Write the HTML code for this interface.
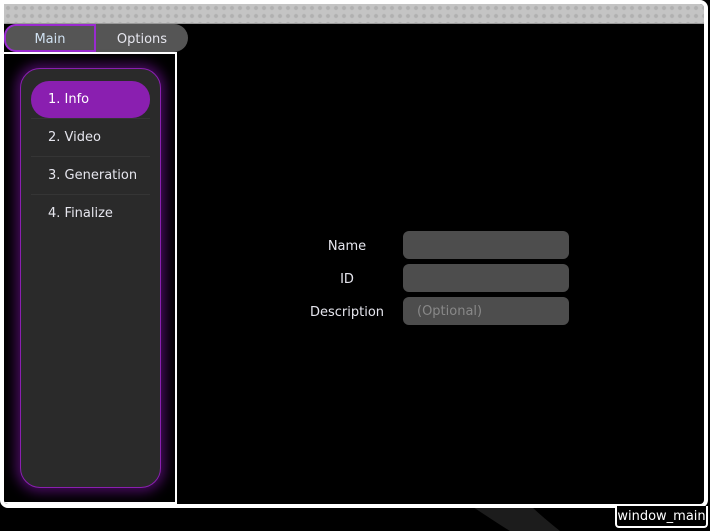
<!DOCTYPE html>
<html><head><style>
body{margin:0;width:710px;height:531px;background:#000;position:relative;overflow:hidden;font-family:"DejaVu Sans","Liberation Sans",sans-serif;font-size:13px;color:#e6e6ee}
.frame{position:absolute;left:0;top:0;width:700px;height:500px;border:4px solid #fff;border-radius:0 8px 8px 8px;background:#000;overflow:hidden}
.check{position:absolute;left:0;top:0;width:700px;height:19px;background-color:#c4c4c4;background-image:radial-gradient(circle,#b0b0b0 1.5px,transparent 2.5px);background-size:8px 8px;border-bottom:1px solid #999}
.tabs{position:absolute;left:0;top:20px;width:184px;height:28px;background:#555;border-radius:14px}
.tab{position:absolute;top:0;height:28px;line-height:32px;text-align:center;font-size:13px}
.side{position:absolute;left:0;top:48px;width:171px;height:448px;border:2px solid #fff;border-left:none;background:#000}
.panel{position:absolute;left:16px;top:14px;width:139px;height:418px;background:#2a2a2a;border:1px solid #8a1fb0;border-radius:20px;box-shadow:0 0 12px 4px rgba(120,20,160,.6)}
.item{position:absolute;left:10px;width:119px;height:37px;line-height:37px;padding-left:17px;box-sizing:border-box;font-size:13px}
.sep{position:absolute;left:10px;width:119px;height:1px;background:#353535}
.lbl{position:absolute;width:100px;text-align:center;left:297px}
.inp{position:absolute;left:403px;width:166px;height:28px;background:#4d4d4d;border-radius:6px}
</style></head><body>
<svg style="position:absolute;left:0;top:505px" width="710" height="26"><path d="M470 0 Q500 20 510 26 L560 26 Q540 10 530 0Z" fill="#1c1c1c"/></svg>
<div class="frame">
<div class="check"></div>
<div class="tabs">
<div class="tab" style="left:0;width:92px;border:2px solid #9a2ad0;box-sizing:border-box;border-radius:12px 0 0 12px;line-height:28px;color:#cfe0f0">Main</div>
<div class="tab" style="left:92px;width:92px">Options</div>
</div>
<div class="side"><div class="panel">
<div class="item" style="top:12px;background:#8a1fb0;border-radius:18px;color:#fff">1. Info</div>
<div class="sep" style="top:49px"></div>
<div class="item" style="top:50px">2. Video</div>
<div class="sep" style="top:87px"></div>
<div class="item" style="top:88px">3. Generation</div>
<div class="sep" style="top:125px"></div>
<div class="item" style="top:126px">4. Finalize</div>
</div></div>
</div>
<div class="lbl" style="top:239px">Name</div>
<div class="lbl" style="top:272px">ID</div>
<div class="lbl" style="top:305px">Description</div>
<div class="inp" style="top:231px"></div>
<div class="inp" style="top:264px"></div>
<div class="inp" style="top:297px;color:#888;line-height:29px;padding-left:14px;box-sizing:border-box">(Optional)</div>
<div style="position:absolute;left:615px;top:506px;width:89px;height:20px;border:2px solid #fff;border-top:none;border-radius:0 0 4px 4px;background:#000;color:#fff;font-size:13px;line-height:22px;text-align:center">window_main</div>
</body></html>
